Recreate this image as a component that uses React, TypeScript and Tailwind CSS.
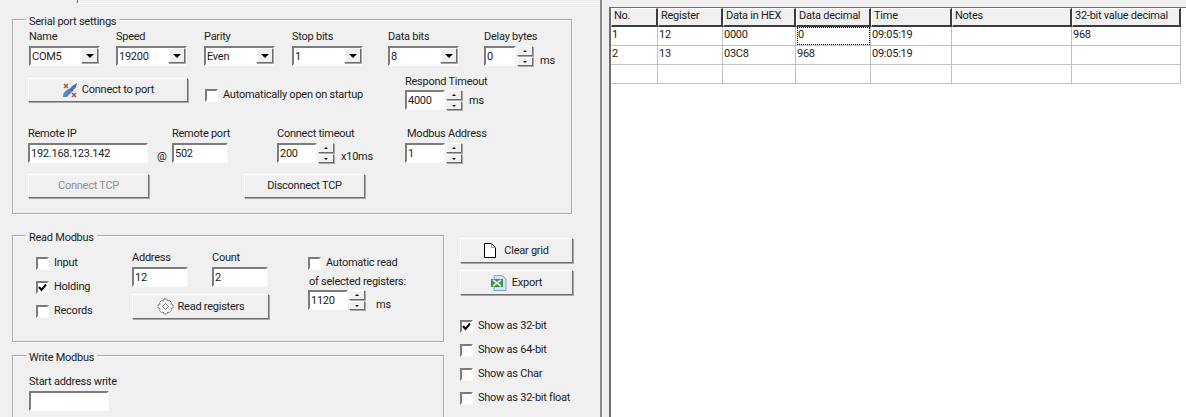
import type { ReactNode } from "react";

const sunken = "border-2 border-t-[#7c7c7c] border-l-[#7c7c7c] border-r-[#fbfbfb] border-b-[#fbfbfb] bg-white";
const raised = "border border-t-white border-l-white border-r-[#6e6e6e] border-b-[#6e6e6e] bg-[#f0f0f0] shadow-[1px_1px_0_#a8a8a8]";

function Label({ children, className = "" }: { children: ReactNode; className?: string }) {
  return <div className={`h-[18px] leading-[18px] whitespace-nowrap ${className}`}>{children}</div>;
}

function TextBox({ value = "", className = "" }: { value?: string; className?: string }) {
  return <div className={`h-[20px] leading-[17px] pl-[1px] overflow-hidden ${sunken} ${className}`}>{value}</div>;
}

function Combo({ value }: { value: string }) {
  return (
    <div className={`w-[71px] h-[20px] flex justify-between ${sunken}`}>
      <span className="leading-[17px] pl-[1px]">{value}</span>
      <div className={`w-[17px] h-[15px] flex items-center justify-center ${raised}`}>
        <div className="border-x-[4px] border-t-[4px] border-x-transparent border-t-black" />
      </div>
    </div>
  );
}

function Spin({ value, className = "" }: { value: string; className?: string }) {
  return (
    <div className="flex">
      <TextBox value={value} className={className} />
      <div className="ml-[1px] w-[16px] h-[20px] flex flex-col gap-[1px]">
        <div className={`h-[10px] flex items-center justify-center ${raised}`}>
          <div className="border-x-[2px] border-b-[2px] border-x-transparent border-b-black" />
        </div>
        <div className={`h-[9px] flex items-center justify-center ${raised}`}>
          <div className="border-x-[2px] border-t-[2px] border-x-transparent border-t-black" />
        </div>
      </div>
    </div>
  );
}

// spin box with its unit beside it, fixed to the box height
function SpinUnit({ value, unit, width, gap, top }: { value: string; unit: string; width: string; gap: string; top: string }) {
  return (
    <div className="flex h-[20px]">
      <Spin value={value} className={width} />
      <span className={`leading-[14px] ${gap} ${top}`}>{unit}</span>
    </div>
  );
}

function Check({ label, checked = false, className = "" }: { label: string; checked?: boolean; className?: string }) {
  return (
    <div className={`flex items-center h-[14px] ${className}`}>
      <div className={`w-[13px] h-[13px] flex items-center justify-center ${sunken}`}>
        {checked && (
          <svg width="9" height="9" viewBox="0 0 9 9">
            <path d="M1 4 L3.500 7 L8 1.500" fill="none" stroke="#000" strokeWidth="2" />
          </svg>
        )}
      </div>
      <span className="ml-[5px] whitespace-nowrap">{label}</span>
    </div>
  );
}

function Button({ children, className = "" }: { children: ReactNode; className?: string }) {
  return <div className={`flex items-center justify-center pt-[1px] whitespace-nowrap ${raised} ${className}`}>{children}</div>;
}

function Group({ title, className = "", children }: { title: string; className?: string; children: ReactNode }) {
  return (
    <div className={`relative border border-[#a9a9a9] shadow-[inset_1px_1px_0_#fbfbfb,1px_1px_0_#fbfbfb] ${className}`}>
      <div className="absolute left-[13px] -top-[7px] h-[16px] leading-[18px] px-[3px] bg-[#f0f0f0] whitespace-nowrap">{title}</div>
      {children}
    </div>
  );
}

function PlugIcon() {
  return (
    <svg width="16" height="16" viewBox="0 0 16 16" className="mr-[4px] -mt-[1px]">
      <path d="M1 15 L1.500 11 L6 7 L10 10 L5 15 Z" fill="#5f83bb" />
      <path d="M6 8 L11 3.500 L15 1 L14 5 L10 10 Z" fill="#4a72b2" />
      <path d="M2 2 L6 6 M6 2 L2 6 M10 11 L14 15 M14 11 L10 15" stroke="#a8544c" strokeWidth="1.500" fill="none" />
    </svg>
  );
}

function GearIcon() {
  return (
    <svg width="17" height="17" viewBox="0 0 17 17" className="mr-[4px] -mt-[1px]">
      <path
        d="M7 1 H10 L10.500 3 L12.500 2.500 L14.500 4.500 L14 6.500 L16 7 V10 L14 10.500 L14.500 12.500 L12.500 14.500 L10.500 14 L10 16 H7 L6.500 14 L4.500 14.500 L2.500 12.500 L3 10.500 L1 10 V7 L3 6.500 L2.500 4.500 L4.500 2.500 L6.500 3 Z"
        fill="#f4f4f4"
        stroke="#6f6f6f"
        strokeDasharray="2 0.6"
      />
      <path d="M8.500 5.500 L11.500 8.500 L8.500 11.500 L5.500 8.500 Z" fill="none" stroke="#777777" />
    </svg>
  );
}

function DocIcon() {
  return (
    <svg width="12" height="15" viewBox="0 0 12 15" className="mr-[8px] -mt-[1px]">
      <path d="M0.500 0.500 H7.500 L11.500 4.500 V14.500 H0.500 Z" fill="#fff" stroke="#000" />
      <path d="M7.500 0.500 V4.500 H11.500" fill="none" stroke="#999" />
    </svg>
  );
}

function ExcelIcon() {
  return (
    <svg width="16" height="16" viewBox="0 0 16 16" className="mr-[5px] -mt-[1px]">
      <path d="M3 0.500 H11 L15 4 V15.500 H3 Z" fill="#d5e4f5" stroke="#7fa4d2" />
      <rect x="0" y="4" width="12" height="8" fill="#3e8f4a" />
      <path d="M2 5 L10 11 M10 5 L2 11" stroke="#d8ecd8" strokeWidth="1.800" />
    </svg>
  );
}

const columns = [
  { title: "No.", width: "w-[47px]" },
  { title: "Register", width: "w-[65px]" },
  { title: "Data in HEX", width: "w-[73px]" },
  { title: "Data decimal", width: "w-[75px]" },
  { title: "Time", width: "w-[81px]" },
  { title: "Notes", width: "w-[120px]" },
  { title: "32-bit value decimal", width: "w-[109px]" },
];

const rows = [
  ["1", "12", "0000", "0", "09:05:19", "", "968"],
  ["2", "13", "03C8", "968", "09:05:19", "", ""],
  ["", "", "", "", "", "", ""],
];

export default function App() {
  return (
    <div className="w-[1186px] h-[417px] overflow-hidden flex bg-[#f0f0f0] text-[11px] tracking-[-0.25px] text-[#1c1c1c] font-['Roboto',Arial,sans-serif]">
      {/* Left side */}
      <div className="w-[602px] h-full shrink-0 border-r-2 border-r-[#8b8b8b] relative">
        <div className="absolute left-[77px] top-0 w-[1px] h-[3px] bg-[#777777]" />
        <div className="ml-[78px] mt-[3px] h-[1px] bg-white" />
        <Group title="Serial port settings" className="ml-[12px] mt-[15px] w-[560px] h-[195px]">
          <div className="flex pl-[16px] pt-[8px]">
            <div className="w-[87px]"><Label>Name</Label><Combo value="COM5" /></div>
            <div className="w-[88px]"><Label>Speed</Label><Combo value="19200" /></div>
            <div className="w-[88px]"><Label>Parity</Label><Combo value="Even" /></div>
            <div className="w-[96px]"><Label>Stop bits</Label><Combo value="1" /></div>
            <div className="w-[96px]"><Label>Data bits</Label><Combo value="8" /></div>
            <div>
              <Label>Delay bytes</Label>
              <SpinUnit value="0" unit="ms" width="w-[32px]" gap="ml-[7px]" top="mt-[8px]" />
            </div>
          </div>
          <div className="flex pl-[15px] mt-[7px] h-[52px]">
            <Button className="w-[160px] h-[24px] mt-[5px]"><PlugIcon />Connect to port</Button>
            <Check label="Automatically open on startup" className="ml-[17px] mt-[15px] w-[200px]" />
            <div>
              <Label>Respond Timeout</Label>
              <div className="-mt-[1px]">
                <SpinUnit value="4000" unit="ms" width="w-[40px]" gap="ml-[7px]" top="mt-[4px]" />
              </div>
            </div>
          </div>
          <div className="flex pl-[15px]">
            <div className="w-[120px]"><Label>Remote IP</Label><TextBox value="192.168.123.142" className="w-[120px]" /></div>
            <span className="ml-[9px] w-[15px] mt-[25px] h-[13px] leading-[13px]">@</span>
            <div className="w-[105px]"><Label>Remote port</Label><TextBox value="502" className="w-[56px]" /></div>
            <div className="w-[128px]">
              <Label>Connect timeout</Label>
              <SpinUnit value="200" unit="x10ms" width="w-[40px]" gap="ml-[7px]" top="mt-[7px]" />
            </div>
            <div>
              <Label className="ml-[2px]">Modbus Address</Label>
              <Spin value="1" className="w-[40px]" />
            </div>
          </div>
          <div className="flex pl-[15px] mt-[11px]">
            <Button className="w-[121px] h-[24px] text-[#8e8e8e]">Connect TCP</Button>
            <Button className="w-[121px] h-[24px] ml-[95px]">Disconnect TCP</Button>
          </div>
        </Group>

        <div className="flex ml-[12px] mt-[21px]">
          <div className="w-[432px] shrink-0">
            <Group title="Read Modbus" className="h-[107px] flex">
              <div className="ml-[23px] mt-[20px] w-[96px] flex flex-col gap-[10px]">
                <Check label="Input" />
                <Check label="Holding" checked />
                <Check label="Records" />
              </div>
              <div className="w-[176px] mt-[13px]">
                <div className="flex">
                  <div className="w-[80px]"><Label>Address</Label><TextBox value="12" className="w-[56px]" /></div>
                  <div><Label>Count</Label><TextBox value="2" className="w-[56px]" /></div>
                </div>
                <Button className="w-[137px] h-[25px] mt-[7px]"><GearIcon />Read registers</Button>
              </div>
              <div className="mt-[20px]">
                <Check label="Automatic read" />
                <Label className="mt-[3px] ml-[1px]">of selected registers:</Label>
                <div className="-mt-[1px]">
                  <SpinUnit value="1120" unit="ms" width="w-[40px]" gap="ml-[11px]" top="mt-[8px]" />
                </div>
              </div>
            </Group>
            <Group title="Write Modbus" className="mt-[13px] h-[100px] pl-[16px] pt-[17px]">
              <Label>Start address write</Label>
              <TextBox className="w-[80px]" />
            </Group>
          </div>
          <div className="ml-[16px] mt-[3px]">
            <Button className="w-[113px] h-[25px]"><DocIcon />Clear grid</Button>
            <Button className="w-[113px] h-[25px] mt-[7px]"><ExcelIcon />Export</Button>
            <div className="flex flex-col gap-[10px] mt-[24px]">
              <Check label="Show as 32-bit" checked />
              <Check label="Show as 64-bit" />
              <Check label="Show as Char" />
              <Check label="Show as 32-bit float" />
            </div>
          </div>
        </div>
      </div>

      {/* Register grid */}
      <div className="flex-1 min-w-0 ml-[7px] mt-[7px] bg-white border-t border-l-2 border-t-[#6e6e6e] border-l-[#6e6e6e]">
        <table className="border-separate border-spacing-0 table-fixed w-[570px]">
          <thead>
            <tr>
              {columns.map((col) => (
                <th
                  key={col.title}
                  className={`${col.width} h-[19px] p-0 pl-[2px] text-left align-top font-normal leading-[13px] bg-[#f0f0f0] border-t border-l border-t-white border-l-white border-r-2 border-b-2 border-r-[#3c3c3c] border-b-[#3c3c3c] whitespace-nowrap`}
                >
                  {col.title}
                </th>
              ))}
            </tr>
          </thead>
          <tbody>
            {rows.map((row, i) => (
              <tr key={i}>
                {row.map((cell, j) => (
                  <td key={j} className="h-[19px] p-0 pl-[1px] leading-[15px] align-top border-r border-b border-[#c0c0c0]">
                    {i === 0 && j === 3 ? (
                      <div className="h-[18px] border border-dotted border-black leading-[13px]">{cell}</div>
                    ) : (
                      cell
                    )}
                  </td>
                ))}
              </tr>
            ))}
          </tbody>
        </table>
      </div>
    </div>
  );
}
